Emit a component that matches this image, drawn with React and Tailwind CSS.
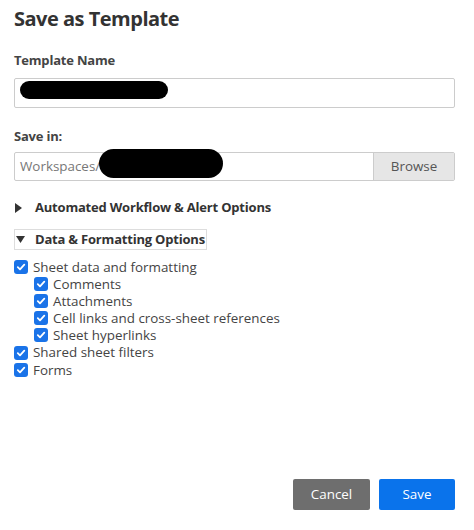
import React, { useState } from 'react';

const Check = ({ checked, onChange }) => (
    <button
        type="button"
        onClick={onChange}
        className={`w-[14px] h-[14px] rounded-[3px] flex items-center justify-center shrink-0 ${checked ? 'bg-[#1a73e8]' : 'bg-white border border-gray-400'}`}
    >
        {checked && (
            <svg width="10" height="10" viewBox="0 0 10 10">
                <path d="M1.8 5.2 L4 7.3 L8.3 2.6" fill="none" stroke="white" strokeWidth="1.8" strokeLinecap="round" strokeLinejoin="round" />
            </svg>
        )}
    </button>
);

const Redact = ({ className }) => (
    <div className={`absolute bg-black rounded-full ${className}`}></div>
);

const App = () => {
    const [opts, setOpts] = useState({
        sheet: true,
        comments: true,
        attachments: true,
        links: true,
        hyperlinks: true,
        filters: true,
        forms: true
    });

    const toggle = (k) => setOpts(prev => ({ ...prev, [k]: !prev[k] }));

    const row = (k, label, nested) => (
        <label key={k} className={`flex items-center gap-[5px] h-[17.2px] ${nested ? 'pl-[20px]' : ''}`}>
            <Check checked={opts[k]} onChange={() => toggle(k)} />
            <span className="text-[13.4px] text-[#444]">{label}</span>
        </label>
    );

    return (
        <div className="w-[474px] h-[530px] bg-white px-[14px] pt-[5px] flex flex-col font-['Open_Sans',sans-serif] text-[#333]">
            <h1 className="text-[20px] font-bold text-[#333] leading-[28px] tracking-[-0.5px]">Save as Template</h1>

            <div className="mt-[18px] text-[13px] font-bold text-[#444] leading-[18px] tracking-[-0.2px]">Template Name</div>
            <div className="relative mt-[9px] h-[30px] border border-[#ccc] rounded-[2px] w-[441px]">
                <Redact className="left-[5px] top-[2px] w-[148px] h-[18px] rounded-[8px]" />
            </div>

            <div className="mt-[19px] text-[13px] font-bold text-[#444] leading-[18px] tracking-[-0.2px]">Save in:</div>
            <div className="relative mt-[7px] h-[29px] w-[441px] flex border border-[#ccc] rounded-[2px]">
                <div className="flex-1 flex items-center pl-[5px] text-[13.4px] text-[#777]">Workspaces/</div>
                <div className="w-[81px] bg-[#e6e6e6] border-l border-[#ccc] flex items-center justify-center text-[13.4px] text-[#555]">Browse</div>
                <Redact className="left-[84px] top-[-4px] w-[124px] h-[29px] rounded-[14px_20px_10px_16px]" />
            </div>

            <div className="mt-[18px] flex items-center gap-[12px] h-[18px]">
                <svg width="8" height="10" viewBox="0 0 8 10" className="ml-[1px]"><path d="M0 0 L7 5 L0 10 Z" fill="#333" /></svg>
                <span className="text-[13px] font-bold text-[#333] tracking-[-0.2px]">Automated Workflow &amp; Alert Options</span>
            </div>

            <div className="mt-[12px] self-start flex items-center gap-[10px] h-[21px] pr-[1px] border border-[#ddd]">
                <svg width="9" height="7" viewBox="0 0 9 7" className="ml-[1px]"><path d="M0 0 L9 0 L4.5 7 Z" fill="#333" /></svg>
                <span className="text-[13px] font-bold text-[#333] tracking-[-0.2px]">Data &amp; Formatting Options</span>
            </div>

            <div className="mt-[8px] flex flex-col">
                {row('sheet', 'Sheet data and formatting')}
                {row('comments', 'Comments', true)}
                {row('attachments', 'Attachments', true)}
                {row('links', 'Cell links and cross-sheet references', true)}
                {row('hyperlinks', 'Sheet hyperlinks', true)}
                {row('filters', 'Shared sheet filters')}
                {row('forms', 'Forms')}
            </div>

            <div className="mt-auto mb-[20px] flex justify-end gap-[9px] pr-[5px]">
                <button className="w-[77px] h-[31px] bg-[#6e6e6e] text-white text-[13.4px] rounded-[2px]">Cancel</button>
                <button className="w-[76px] h-[31px] bg-[#0a73eb] text-white text-[13.4px] rounded-[2px]">Save</button>
            </div>
        </div>
    );
};

export default App;
